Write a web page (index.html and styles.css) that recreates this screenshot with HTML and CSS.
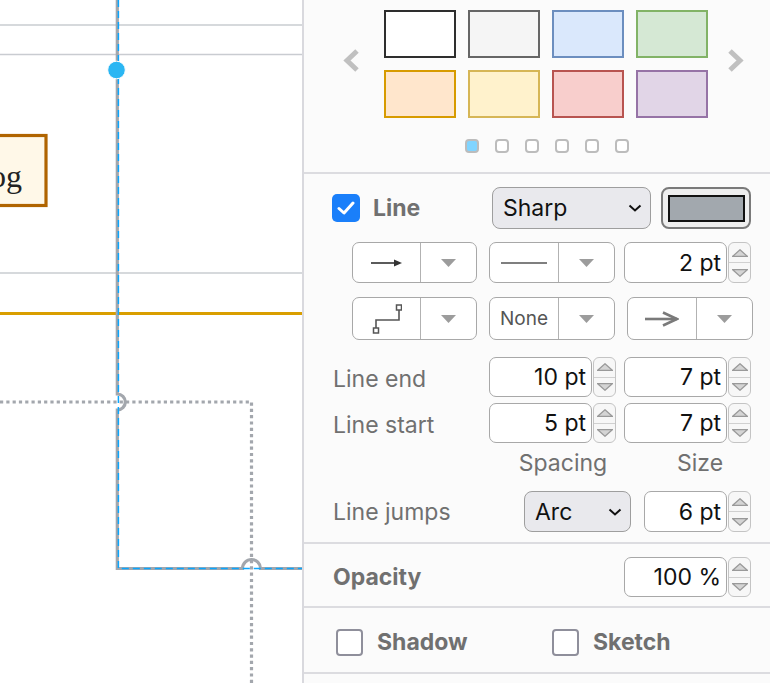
FILE: index.html
```html
<!DOCTYPE html>
<html>
<head>
<meta charset="utf-8">
<link rel="stylesheet" href="styles.css">
</head>
<body>
<div class="app">
  <div class="canvas">
    <svg class="canvas-svg" width="302" height="683" viewBox="0 0 302 683">
      <g stroke="#c9ccd1" stroke-width="1.5">
        <line x1="0" y1="25" x2="302" y2="25"/>
        <line x1="0" y1="54.5" x2="302" y2="54.5"/>
        <line x1="0" y1="273" x2="302" y2="273"/>
      </g>
      <line x1="0" y1="313.5" x2="302" y2="313.5" stroke="#d99e00" stroke-width="3"/>
      <rect x="-20" y="135.5" width="66" height="70" fill="#fff8e8" stroke="#b06400" stroke-width="3.2"/>
      <text x="22" y="187" text-anchor="end" class="og">og</text>
      <path d="M0,402 H251.5 V683" stroke="#a3a7ad" stroke-width="3.2" stroke-dasharray="3.2 3.1" fill="none"/>
      <path d="M117.3,0 V394 A8,8 0 0 1 117.3,410 V568.5 H242.5 A9,9 0 0 1 260.5,568.5 H302" stroke="#a3a7ad" stroke-width="3.2" fill="none"/>
      <path d="M118.4,0 V568.6 H302" stroke="#0aa6ff" stroke-width="1.5" stroke-dasharray="7 4" fill="none"/>
      <circle cx="116.5" cy="70" r="8.8" fill="#2ab6f3" stroke="#ffffff" stroke-width="1"/>
    </svg>
  </div>

  <div class="panel">
    <section class="sec palette">
      <div class="pal-row">
        <div class="nav nav-l">
          <svg width="17" height="25" viewBox="0 0 17 25"><polyline points="14,3 4,12.5 14,22" fill="none" stroke="#c0c0c0" stroke-width="5"/></svg>
        </div>
        <div class="swatches">
          <div class="sw sw1"></div>
          <div class="sw sw2"></div>
          <div class="sw sw3"></div>
          <div class="sw sw4"></div>
          <div class="sw sw5"></div>
          <div class="sw sw6"></div>
          <div class="sw sw7"></div>
          <div class="sw sw8"></div>
        </div>
        <div class="nav nav-r">
          <svg width="17" height="25" viewBox="0 0 17 25"><polyline points="3,3 13,12.5 3,22" fill="none" stroke="#c0c0c0" stroke-width="5"/></svg>
        </div>
      </div>
      <div class="dots">
        <span class="dot on"></span><span class="dot"></span><span class="dot"></span><span class="dot"></span><span class="dot"></span><span class="dot"></span>
      </div>
    </section>

    <section class="sec line-sec">
      <div class="row r-line">
        <span class="cb-blue"><svg width="18" height="14" viewBox="0 0 18 14"><polyline points="2,7.5 7,12 16,2" fill="none" stroke="#fff" stroke-width="3" stroke-linecap="round" stroke-linejoin="round"/></svg></span>
        <span class="blabel">Line</span>
        <div class="select sel-sharp"><span>Sharp</span><svg width="14" height="8" viewBox="0 0 14 8"><polyline points="1.5,1.5 7,6.5 12.5,1.5" fill="none" stroke="#111" stroke-width="2"/></svg></div>
        <div class="colorbtn"><span class="colorfill"></span></div>
      </div>

      <div class="row r-btns">
        <div class="combo w125">
          <span class="main"><svg width="31" height="12" viewBox="0 0 31 12"><line x1="0" y1="6" x2="25" y2="6" stroke="#333" stroke-width="1.6"/><polygon points="23,2.5 31,6 23,9.5" fill="#333"/></svg></span>
          <span class="drop"><svg width="15" height="8" viewBox="0 0 15 8"><polygon points="0,0 15,0 7.5,8" fill="#9c9c9c"/></svg></span>
        </div>
        <div class="combo w126 gap9">
          <span class="main"><svg width="46" height="4" viewBox="0 0 46 4"><line x1="0" y1="2" x2="46" y2="2" stroke="#555" stroke-width="1.6"/></svg></span>
          <span class="drop"><svg width="15" height="8" viewBox="0 0 15 8"><polygon points="0,0 15,0 7.5,8" fill="#9c9c9c"/></svg></span>
        </div>
        <div class="num w103">2 pt</div>
        <div class="spin"><span><svg width="16" height="8" viewBox="0 0 16 8"><polygon points="8,0.7 15.3,7.3 0.7,7.3" fill="#d4d4d4" stroke="#999" stroke-width="1.2"/></svg></span><span><svg width="16" height="8" viewBox="0 0 16 8"><polygon points="0.7,0.7 15.3,0.7 8,7.3" fill="#d4d4d4" stroke="#999" stroke-width="1.2"/></svg></span></div>
      </div>

      <div class="row r-btns2">
        <div class="combo w125">
          <span class="main"><svg width="30" height="32" viewBox="0 0 30 32"><path d="M4,25 V17 H27 V7" fill="none" stroke="#555" stroke-width="1.6"/><rect x="1.5" y="25" width="5" height="5" fill="none" stroke="#555" stroke-width="1.5"/><rect x="24.5" y="2" width="5" height="5" fill="none" stroke="#555" stroke-width="1.5"/></svg></span>
          <span class="drop"><svg width="15" height="8" viewBox="0 0 15 8"><polygon points="0,0 15,0 7.5,8" fill="#9c9c9c"/></svg></span>
        </div>
        <div class="combo w126">
          <span class="main none-txt">None</span>
          <span class="drop"><svg width="15" height="8" viewBox="0 0 15 8"><polygon points="0,0 15,0 7.5,8" fill="#9c9c9c"/></svg></span>
        </div>
        <div class="combo w126">
          <span class="main"><svg width="34" height="16" viewBox="0 0 34 16"><line x1="0" y1="8" x2="32" y2="8" stroke="#7a7a7a" stroke-width="2.6"/><polyline points="18,1.5 32,8 18,14.5" fill="none" stroke="#7a7a7a" stroke-width="2.6"/></svg></span>
          <span class="drop"><svg width="15" height="8" viewBox="0 0 15 8"><polygon points="0,0 15,0 7.5,8" fill="#9c9c9c"/></svg></span>
        </div>
      </div>

      <div class="row r-field r-end">
        <span class="label">Line end</span>
        <div class="num w103">10 pt</div>
        <div class="spin"><span><svg width="16" height="8" viewBox="0 0 16 8"><polygon points="8,0.7 15.3,7.3 0.7,7.3" fill="#d4d4d4" stroke="#999" stroke-width="1.2"/></svg></span><span><svg width="16" height="8" viewBox="0 0 16 8"><polygon points="0.7,0.7 15.3,0.7 8,7.3" fill="#d4d4d4" stroke="#999" stroke-width="1.2"/></svg></span></div>
        <div class="num w103 gapl8">7 pt</div>
        <div class="spin"><span><svg width="16" height="8" viewBox="0 0 16 8"><polygon points="8,0.7 15.3,7.3 0.7,7.3" fill="#d4d4d4" stroke="#999" stroke-width="1.2"/></svg></span><span><svg width="16" height="8" viewBox="0 0 16 8"><polygon points="0.7,0.7 15.3,0.7 8,7.3" fill="#d4d4d4" stroke="#999" stroke-width="1.2"/></svg></span></div>
      </div>

      <div class="row r-field r-start">
        <span class="label">Line start</span>
        <div class="num w103">5 pt</div>
        <div class="spin"><span><svg width="16" height="8" viewBox="0 0 16 8"><polygon points="8,0.7 15.3,7.3 0.7,7.3" fill="#d4d4d4" stroke="#999" stroke-width="1.2"/></svg></span><span><svg width="16" height="8" viewBox="0 0 16 8"><polygon points="0.7,0.7 15.3,0.7 8,7.3" fill="#d4d4d4" stroke="#999" stroke-width="1.2"/></svg></span></div>
        <div class="num w103 gapl8">7 pt</div>
        <div class="spin"><span><svg width="16" height="8" viewBox="0 0 16 8"><polygon points="8,0.7 15.3,7.3 0.7,7.3" fill="#d4d4d4" stroke="#999" stroke-width="1.2"/></svg></span><span><svg width="16" height="8" viewBox="0 0 16 8"><polygon points="0.7,0.7 15.3,0.7 8,7.3" fill="#d4d4d4" stroke="#999" stroke-width="1.2"/></svg></span></div>
      </div>

      <div class="row r-caps">
        <span class="cap cap1">Spacing</span>
        <span class="cap cap2">Size</span>
      </div>

      <div class="row r-field r-jumps">
        <span class="label lj">Line jumps</span>
        <div class="select sel-arc"><span>Arc</span><svg width="14" height="8" viewBox="0 0 14 8"><polyline points="1.5,1.5 7,6.5 12.5,1.5" fill="none" stroke="#111" stroke-width="2"/></svg></div>
        <div class="num w83">6 pt</div>
        <div class="spin"><span><svg width="16" height="8" viewBox="0 0 16 8"><polygon points="8,0.7 15.3,7.3 0.7,7.3" fill="#d4d4d4" stroke="#999" stroke-width="1.2"/></svg></span><span><svg width="16" height="8" viewBox="0 0 16 8"><polygon points="0.7,0.7 15.3,0.7 8,7.3" fill="#d4d4d4" stroke="#999" stroke-width="1.2"/></svg></span></div>
      </div>
    </section>

    <section class="sec op-sec">
      <div class="row r-field">
        <span class="blabel lo">Opacity</span>
        <div class="num w103">100 %</div>
        <div class="spin"><span><svg width="16" height="8" viewBox="0 0 16 8"><polygon points="8,0.7 15.3,7.3 0.7,7.3" fill="#d4d4d4" stroke="#999" stroke-width="1.2"/></svg></span><span><svg width="16" height="8" viewBox="0 0 16 8"><polygon points="0.7,0.7 15.3,0.7 8,7.3" fill="#d4d4d4" stroke="#999" stroke-width="1.2"/></svg></span></div>
      </div>
    </section>

    <section class="sec chk-sec">
      <div class="row r-chk">
        <div class="chk-item"><span class="cb-empty"></span><span class="blabel">Shadow</span></div>
        <div class="chk-item"><span class="cb-empty"></span><span class="blabel">Sketch</span></div>
      </div>
    </section>
  </div>
</div>
</body>
</html>
```

FILE: styles.css
```css
html, body {
  margin: 0;
  padding: 0;
}
body {
  font-family: Inter, "Liberation Sans", sans-serif;
  font-size: 24px;
  background: #ffffff;
}
.app {
  display: flex;
  width: 770px;
  height: 683px;
  overflow: hidden;
  background: #ffffff;
}
.canvas {
  width: 302px;
  flex: none;
}
.canvas-svg {
  display: block;
}
.og {
  font-family: "Liberation Serif", serif;
  font-size: 32px;
  fill: #222222;
}
.panel {
  width: 466px;
  flex: none;
  border-left: 2px solid #d9d9de;
  background: #fbfbfb;
}
.sec {
  border-bottom: 2px solid #dcdce0;
}

/* palette */
.palette {
  padding-top: 10px;
  height: 162px;
}
.pal-row {
  display: flex;
  align-items: center;
}
.nav {
  display: flex;
  box-sizing: border-box;
  margin-bottom: 8px;
}
.nav-l {
  width: 80px;
  justify-content: flex-end;
  padding-right: 24px;
}
.nav-r {
  flex: 1;
  padding-left: 19px;
}
.nav svg {
  display: block;
}
.swatches {
  display: grid;
  grid-template-columns: repeat(4, 72px);
  grid-auto-rows: 48px;
  gap: 12px;
  width: 324px;
}
.sw {
  box-sizing: border-box;
  border: 2px solid #333;
}
.sw1 { background: #ffffff; border-color: #2e2e2e; }
.sw2 { background: #f5f5f5; border-color: #666666; }
.sw3 { background: #dae8fc; border-color: #6c8ebf; }
.sw4 { background: #d5e8d4; border-color: #82b366; }
.sw5 { background: #ffe6cc; border-color: #d79b00; }
.sw6 { background: #fff2cc; border-color: #d6b656; }
.sw7 { background: #f8cecc; border-color: #b85450; }
.sw8 { background: #e1d5e7; border-color: #9673a6; }
.dots {
  display: flex;
  gap: 16px;
  margin-left: 161px;
  margin-top: 21px;
}
.dot {
  width: 14px;
  height: 14px;
  box-sizing: border-box;
  border: 2.5px solid #bcbcbc;
  border-radius: 4px;
  background: #ffffff;
}
.dot.on {
  background: #80d4ff;
}

/* line section */
.line-sec {
  padding: 13px 0 10px 0;
}
.row {
  display: flex;
  align-items: center;
}
.r-line {
  height: 42px;
  padding-left: 28px;
  padding-right: 19px;
}
.cb-blue {
  width: 28px;
  height: 28px;
  border-radius: 5px;
  background: #1a7ffa;
  display: flex;
  align-items: center;
  justify-content: center;
}
.blabel {
  font-weight: 700;
  color: #707070;
  font-size: 23px;
}
.r-line .blabel {
  margin-left: 13px;
}
.select {
  display: flex;
  align-items: center;
  justify-content: space-between;
  box-sizing: border-box;
  height: 42px;
  border: 1.5px solid #9e9e9e;
  border-radius: 8px;
  background: #e9e9ed;
  padding: 0 8px 0 10px;
  color: #111111;
  font-size: 23px;
}
.sel-sharp {
  width: 159px;
  margin-left: auto;
}
.sel-arc {
  width: 107px;
  height: 41px;
  margin-right: 13px;
}
.colorbtn {
  width: 90px;
  height: 42px;
  margin-left: 10px;
  box-sizing: border-box;
  border: 2px solid #7a7a7a;
  border-radius: 8px;
  background: #eeeeee;
  display: flex;
  align-items: center;
  justify-content: center;
}
.colorfill {
  width: 77px;
  height: 27px;
  box-sizing: border-box;
  border: 2px solid #111111;
  background: #a2a8ae;
}

.r-btns {
  height: 41px;
  margin-top: 13px;
  padding-left: 48px;
  align-items: stretch;
}
.r-btns2 {
  height: 43px;
  margin-top: 14px;
  padding-left: 48px;
  align-items: stretch;
}
.combo {
  display: flex;
  box-sizing: border-box;
  border: 1.5px solid #a8a8a8;
  border-radius: 7px;
  background: #ffffff;
  margin-right: 12px;
}
.combo.gap9 {
  margin-right: 9px;
}
.w125 { width: 125px; }
.w126 { width: 126px; }
.combo .main {
  flex: 1;
  display: flex;
  align-items: center;
  justify-content: center;
}
.combo .drop {
  width: 55px;
  border-left: 1.5px solid #b2b2b2;
  display: flex;
  align-items: center;
  justify-content: center;
}
.combo svg {
  display: block;
}
.none-txt {
  font-size: 19px;
  color: #555555;
}
.num {
  box-sizing: border-box;
  border: 1.5px solid #a8a8a8;
  border-radius: 7px;
  background: #ffffff;
  display: flex;
  align-items: center;
  justify-content: flex-end;
  padding-right: 5px;
  color: #111111;
  font-size: 23px;
}
.w103 { width: 103px; }
.w83 { width: 83px; }
.gapl8 { margin-left: 8px; }
.spin {
  width: 23px;
  margin-left: 1px;
  box-sizing: border-box;
  border: 1.5px solid #c4c4c4;
  border-radius: 6px;
  background: #f7f7f7;
  display: flex;
  flex-direction: column;
  align-self: stretch;
}
.spin span {
  flex: 1;
  display: flex;
  align-items: center;
  justify-content: center;
}
.spin span + span {
  border-top: 1.5px solid #d0d0d0;
}
.spin svg {
  display: block;
}

.r-field {
  height: 40px;
  padding-left: 29px;
}
.r-field .num,
.r-field .select {
  align-self: stretch;
}
.r-end {
  margin-top: 17px;
}
.r-start {
  margin-top: 6px;
}
.label {
  width: 156px;
  color: #707070;
  font-size: 23px;
  padding-top: 3px;
}
.label.lj {
  width: 191px;
  padding-top: 0;
}
.r-jumps {
  height: 41px;
  margin-top: 16px;
}
.r-caps {
  height: 24px;
  margin-top: 8px;
  padding-left: 185px;
}
.cap {
  text-align: center;
  color: #707070;
  font-size: 23px;
}
.cap1 { width: 148px; }
.cap2 { width: 126px; }

/* opacity */
.op-sec {
  padding: 13px 0 9px 0;
}
.blabel.lo {
  width: 291px;
}

/* checkboxes */
.chk-sec {
  padding: 20px 0 16px 0;
}
.r-chk {
  height: 28px;
  padding-left: 32px;
}
.chk-item {
  width: 216px;
  display: flex;
  align-items: center;
}
.cb-empty {
  width: 27px;
  height: 27px;
  box-sizing: border-box;
  border: 2.7px solid #8f8f9b;
  border-radius: 4px;
  background: #ffffff;
  margin-right: 14px;
}
```
